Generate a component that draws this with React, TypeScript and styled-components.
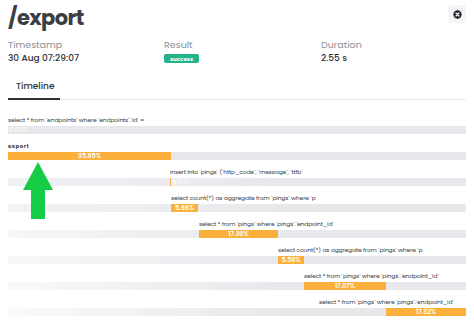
import React from "react";
import styled, { createGlobalStyle } from "styled-components";

const Global = createGlobalStyle`
  html, body { margin: 0; padding: 0; background: #fff; }
  body { font-family: "Poppins", "Inter", "Noto Sans", sans-serif; color: #3b3f46; }
  * { box-sizing: border-box; }
`;

const Page = styled.div`
  width: 474px;
  height: 326px;
  overflow: hidden;
  padding: 4px 8px 0 8px;
  position: relative;
`;

const Header = styled.div`
  display: flex;
  align-items: flex-start;
  justify-content: space-between;
`;

const Title = styled.h1`
  margin: 0;
  font-size: 21px;
  line-height: 27px;
  font-weight: 700;
  color: #3a3e45;
  letter-spacing: -0.6px;
`;

const CloseBtn = styled.div`
  width: 18px;
  height: 18px;
  margin-top: 1px;
  background: #f4f5f6;
  border-radius: 3px;
  display: flex;
  align-items: center;
  justify-content: center;
`;

const Meta = styled.div`
  display: grid;
  grid-template-columns: 156px 157px 1fr;
  margin-top: 8px;
`;

const MetaCol = styled.div`
  display: flex;
  flex-direction: column;
  gap: 1px;
`;

const MetaLabel = styled.div`
  font-size: 9.5px;
  line-height: 12px;
  color: #8a8f96;
`;

const MetaValue = styled.div`
  font-size: 9px;
  line-height: 12px;
  color: #2c3036;
  font-weight: 500;
`;

const Badge = styled.span`
  align-self: flex-start;
  margin-top: 2px;
  background: #22b38b;
  color: #fff;
  font-size: 5.5px;
  font-weight: 700;
  line-height: 8px;
  padding: 0 6px;
  border-radius: 2px;
  height: 9px;
  display: inline-flex;
  align-items: center;
`;

const Tabs = styled.div`
  margin-top: 14px;
  border-bottom: 1px solid #e6e8eb;
  display: flex;
  width: 458px;
`;

const Tab = styled.div`
  padding: 2px 8px 5px 8px;
  font-size: 9px;
  line-height: 13px;
  color: #2e3238;
  font-weight: 500;
  border-bottom: 2px solid #2e3238;
  margin-bottom: -1px;
  width: 52px;
`;

const Timeline = styled.div`
  margin-top: 16px;
  display: flex;
  flex-direction: column;
  width: 458px;
`;

const Row = styled.div`
  display: flex;
  flex-direction: column;
  margin-bottom: 8px;
`;

const RowLabel = styled.div<{ $offset: number; $bold?: boolean }>`
  padding-left: ${(p) => p.$offset}px;
  font-size: ${(p) => (p.$bold ? 5.3 : 6)}px;
  font-weight: ${(p) => (p.$bold ? 700 : 400)};
  letter-spacing: ${(p) => (p.$bold ? 0.6 : -0.15)}px;
  line-height: 8px;
  color: #3b3f46;
  white-space: nowrap;
  margin-bottom: 2px;
`;

const Track = styled.div<{ $fade: number }>`
  height: 8px;
  background: linear-gradient(
    to right,
    rgba(229, 231, 235, ${(p) => p.$fade}) 0%,
    #e6e8eb 60%
  );
  display: flex;
`;

const Spacer = styled.div``;

const Fill = styled.div`
  height: 8px;
  background: #fbb03b;
  color: #fff;
  font-size: 6.3px;
  line-height: 8px;
  font-weight: 600;
  white-space: nowrap;
  display: flex;
  justify-content: center;
`;

const FaintText = styled.span`
  padding-left: 1px;
  color: #f7f7f8;
  font-size: 6.3px;
  line-height: 8px;
  font-weight: 600;
`;

const Sliver = styled.div`
  width: 1px;
  height: 8px;
  background: #fbb03b;
`;

const Arrow = styled.svg`
  position: absolute;
  left: 22px;
  top: 162px;
`;

type Item = {
  label: string;
  labelOffset: number;
  start: number;
  width: number;
  pct: string;
  bold?: boolean;
  fade: number;
};

const items: Item[] = [
  { label: "select * from `endpoints` where `endpoints`.`id` =", labelOffset: 0, start: 0, width: 0, pct: "0.05%", fade: 1 },
  { label: "export", labelOffset: 0, start: 0, width: 163, pct: "35.65%", bold: true, fade: 1 },
  { label: "insert into `pings` (`http_code`, `message`, `ttfb`", labelOffset: 162, start: 162, width: 1, pct: "0.17%", fade: 0.6 },
  { label: "select count(*) as aggregate from `pings` where `p", labelOffset: 163, start: 163, width: 27, pct: "5.98%", fade: 0.5 },
  { label: "select * from `pings` where `pings`.`endpoint_id`", labelOffset: 191, start: 191, width: 79, pct: "17.30%", fade: 0.35 },
  { label: "select count(*) as aggregate from `pings` where `p", labelOffset: 270, start: 270, width: 26, pct: "5.58%", fade: 0.3 },
  { label: "select * from `pings` where `pings`.`endpoint_id`", labelOffset: 296, start: 296, width: 82, pct: "17.07%", fade: 0.25 },
  { label: "select * from `pings` where `pings`.`endpoint_id`", labelOffset: 311, start: 378, width: 80, pct: "17.32%", fade: 0.2 },
];

export default function App() {
  return (
    <>
      <Global />
      <Page>
        <Header>
          <Title>/export</Title>
          <CloseBtn>
            <svg width="9" height="9" viewBox="0 0 10 10">
              <circle cx="5" cy="5" r="4.6" fill="#1f2328" />
              <path d="M3.3 3.3 L6.7 6.7 M6.7 3.3 L3.3 6.7" stroke="#fff" strokeWidth="1.3" strokeLinecap="round" />
            </svg>
          </CloseBtn>
        </Header>
        <Meta>
          <MetaCol>
            <MetaLabel>Timestamp</MetaLabel>
            <MetaValue>30 Aug 07:29:07</MetaValue>
          </MetaCol>
          <MetaCol>
            <MetaLabel>Result</MetaLabel>
            <Badge>success</Badge>
          </MetaCol>
          <MetaCol>
            <MetaLabel>Duration</MetaLabel>
            <MetaValue>2.55 s</MetaValue>
          </MetaCol>
        </Meta>
        <Tabs>
          <Tab>Timeline</Tab>
        </Tabs>
        <Timeline>
          {items.map((it, i) => (
            <Row key={i}>
              <RowLabel $offset={it.labelOffset} $bold={it.bold}>
                {it.label}
              </RowLabel>
              <Track $fade={it.fade}>
                <Spacer style={{ width: it.start }} />
                {it.width === 0 ? (
                  <FaintText>{it.pct}</FaintText>
                ) : it.width === 1 ? (
                  <>
                    <Sliver />
                    <FaintText>{it.pct}</FaintText>
                  </>
                ) : (
                  <Fill style={{ width: it.width }}>{it.pct}</Fill>
                )}
              </Track>
            </Row>
          ))}
        </Timeline>
        <Arrow width="32" height="58" viewBox="0 0 32 58">
          <polygon points="16,0 31,28 23,28 23,57 9,57 9,28 1,28" fill="#16cc47" />
        </Arrow>
      </Page>
    </>
  );
}
